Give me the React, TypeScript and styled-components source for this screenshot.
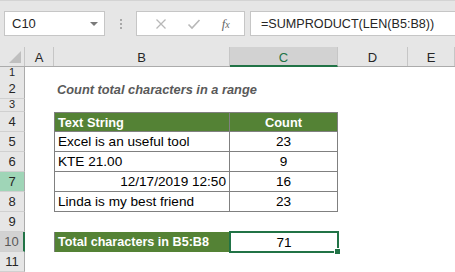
import React from "react";
import styled, { createGlobalStyle, css } from "styled-components";

const GlobalStyle = createGlobalStyle`
  html, body { margin: 0; padding: 0; background: #ffffff; }
  body { font-family: "Liberation Sans", Arial, sans-serif; overflow: hidden; }
`;

const COLS = "25px 29px 176px 108px 70px 1fr";

const Window = styled.div`
  width: 455px;
  height: 272px;
  overflow: hidden;
  background: #ffffff;
  display: flex;
  flex-direction: column;
`;

const FormulaBar = styled.div`
  height: 47px;
  flex: none;
  box-sizing: border-box;
  background: #e6e6e6;
  border-top: 1px solid #d4d4d4;
  display: flex;
  align-items: flex-start;
  padding: 10px 0 0 4px;
`;

const NameBox = styled.div`
  width: 101px;
  height: 25px;
  box-sizing: border-box;
  background: #ffffff;
  border: 1px solid #c6c6c6;
  display: flex;
  align-items: center;
  justify-content: space-between;
  padding: 0 6px 0 7px;
  font-size: 13px;
  color: #262626;
`;

const DropArrow = styled.span`
  width: 0;
  height: 0;
  border-left: 4px solid transparent;
  border-right: 4px solid transparent;
  border-top: 4px solid #7a7a7a;
`;

const Grip = styled.div`
  width: 31px;
  height: 25px;
  display: flex;
  flex-direction: column;
  align-items: center;
  justify-content: center;
  gap: 2px;
  & > span {
    width: 2px;
    height: 2px;
    background: #a8a8a8;
  }
`;

const ButtonBox = styled.div`
  width: 109px;
  height: 25px;
  box-sizing: border-box;
  background: #ffffff;
  border: 1px solid #c6c6c6;
  display: flex;
  align-items: center;
  justify-content: space-around;
  padding: 0 4px 0 8px;
`;

const Fx = styled.span`
  font-family: "Liberation Serif", serif;
  font-style: italic;
  font-size: 13px;
  color: #666666;
`;

const FxSub = styled.span`
  font-size: 10px;
`;

const FormulaInput = styled.div`
  flex: 1;
  margin-left: 5px;
  height: 25px;
  box-sizing: border-box;
  background: #ffffff;
  border: 1px solid #c6c6c6;
  border-right: none;
  display: flex;
  align-items: center;
  padding-left: 10px;
  font-size: 12.6px;
  color: #262626;
`;

const Row = styled.div<{ $h: number }>`
  display: grid;
  grid-template-columns: ${COLS};
  height: ${(p) => p.$h}px;
  flex: none;
`;

const HeaderRow = styled(Row)`
  background: #e6e6e6;
  border-bottom: 1px solid #ababab;
  box-sizing: border-box;
`;

const Corner = styled.div`
  position: relative;
  border-right: 1px solid #c6c6c6;
  box-sizing: border-box;
  &::after {
    content: "";
    position: absolute;
    right: 3px;
    bottom: 3px;
    width: 0;
    height: 0;
    border-left: 12px solid transparent;
    border-bottom: 12px solid #bfbfbf;
  }
`;

const ColHead = styled.div<{ $active?: boolean }>`
  display: flex;
  align-items: center;
  justify-content: center;
  font-size: 13px;
  color: #262626;
  box-sizing: border-box;
  border-right: 1px solid #c6c6c6;
  padding-top: 1px;
  ${(p) =>
    p.$active &&
    css`
      background: #d2d2d2;
      color: #217346;
      border-bottom: 2px solid #217346;
      margin-bottom: -1px;
      padding-top: 2px;
    `}
`;

const RowHead = styled.div<{ $state?: "sel" | "hl"; $short?: boolean }>`
  display: flex;
  align-items: ${(p) => (p.$short ? "flex-end" : "center")};
  justify-content: center;
  font-size: 13px;
  color: #262626;
  background: #e6e6e6;
  box-sizing: border-box;
  border-right: 1px solid #ababab;
  border-bottom: 1px solid #d0d0d0;
  line-height: 1;
  ${(p) =>
    p.$short &&
    css`
      font-size: 11px;
      padding-bottom: 1px;
    `}
  ${(p) =>
    p.$state === "hl" &&
    css`
      background: #9fd5b7;
    `}
  ${(p) =>
    p.$state === "sel" &&
    css`
      background: #d2d2d2;
      color: #595959;
      border-right: 2px solid #217346;
    `}
`;

type Kind = "plain" | "title" | "head" | "body" | "total";

const Cell = styled.div<{
  $kind?: Kind;
  $align?: "left" | "center" | "right";
  $first?: boolean;
  $top?: boolean;
}>`
  position: relative;
  display: flex;
  align-items: center;
  box-sizing: border-box;
  font-size: 13.6px;
  color: #000000;
  white-space: nowrap;
  padding: 0 3px;
  justify-content: ${(p) =>
    p.$align === "center" ? "center" : p.$align === "right" ? "flex-end" : "flex-start"};
  ${(p) =>
    p.$kind === "title" &&
    css`
      font-style: italic;
      font-weight: bold;
      font-size: 12.8px;
      color: #595959;
      overflow: visible;
    `}
  ${(p) =>
    (p.$kind === "head" || p.$kind === "body") &&
    css`
      border-right: 1px solid #808080;
      border-bottom: 1px solid #808080;
    `}
  ${(p) =>
    p.$kind === "head" &&
    css`
      background: #548235;
      color: #ffffff;
      font-weight: bold;
      font-size: 12.8px;
    `}
  ${(p) =>
    p.$top &&
    css`
      border-top: 1px solid #808080;
    `}
  ${(p) =>
    p.$first &&
    css`
      border-left: 1px solid #808080;
    `}
  ${(p) =>
    p.$kind === "total" &&
    css`
      background: #548235;
      color: #ffffff;
      font-weight: bold;
      font-size: 12.6px;
      border-left: 1px solid #808080;
    `}
`;

const Selection = styled.div`
  position: absolute;
  left: -1px;
  top: -1px;
  right: -1px;
  bottom: -1px;
  border: 2px solid #217346;
  pointer-events: none;
  &::after {
    content: "";
    position: absolute;
    right: -4px;
    bottom: -4px;
    width: 5px;
    height: 5px;
    background: #217346;
    border: 1px solid #ffffff;
  }
`;

const CellValue = styled.span`
  position: relative;
  z-index: 1;
`;

type RowDef = {
  n: number;
  h: number;
  state?: "sel" | "hl";
  b?: React.ReactNode;
  c?: React.ReactNode;
  kind?: Kind;
  bAlign?: "left" | "right";
  top?: boolean;
  total?: boolean;
};

const rows: RowDef[] = [
  { n: 1, h: 12 },
  { n: 2, h: 20, b: "Count total characters in a range", kind: "title" },
  { n: 3, h: 13 },
  { n: 4, h: 20, b: "Text String", c: "Count", kind: "head", top: true },
  { n: 5, h: 20, b: "Excel is an useful tool", c: "23", kind: "body" },
  { n: 6, h: 20, b: "KTE 21.00", c: "9", kind: "body" },
  { n: 7, h: 20, state: "hl", b: "12/17/2019 12:50", c: "16", kind: "body", bAlign: "right" },
  { n: 8, h: 20, b: "Linda is my best friend", c: "23", kind: "body" },
  { n: 9, h: 20 },
  { n: 10, h: 20, state: "sel", total: true },
  { n: 11, h: 20 },
];

export default function App() {
  return (
    <Window>
      <GlobalStyle />
      <FormulaBar>
        <NameBox>
          <span>C10</span>
          <DropArrow />
        </NameBox>
        <Grip>
          <span />
          <span />
          <span />
        </Grip>
        <ButtonBox>
          <svg width="12" height="12" viewBox="0 0 12 12">
            <path d="M1.5 1.5 L10.5 10.5 M10.5 1.5 L1.5 10.5" stroke="#b8b8b8" strokeWidth="1.3" fill="none" />
          </svg>
          <svg width="14" height="12" viewBox="0 0 14 12">
            <path d="M1.5 6.5 L5 10 L12.5 2" stroke="#b8b8b8" strokeWidth="1.6" fill="none" />
          </svg>
          <Fx>
            f<FxSub>x</FxSub>
          </Fx>
        </ButtonBox>
        <FormulaInput>=SUMPRODUCT(LEN(B5:B8))</FormulaInput>
      </FormulaBar>

      <HeaderRow $h={20}>
        <Corner />
        <ColHead>A</ColHead>
        <ColHead>B</ColHead>
        <ColHead $active>C</ColHead>
        <ColHead>D</ColHead>
        <ColHead>E</ColHead>
      </HeaderRow>

      {rows.map((r) => (
        <Row key={r.n} $h={r.h}>
          <RowHead $state={r.state} $short={r.h < 15}>
            {r.n}
          </RowHead>
          <Cell />
          {r.total ? (
            <>
              <Cell $kind="total">Total characters in B5:B8</Cell>
              <Cell $align="center">
                <Selection />
                <CellValue>71</CellValue>
              </Cell>
            </>
          ) : (
            <>
              <Cell $kind={r.kind} $first={r.kind === "head" || r.kind === "body"} $top={r.top} $align={r.bAlign}>
                {r.b}
              </Cell>
              <Cell $kind={r.kind === "title" ? undefined : r.kind} $top={r.top} $align="center">
                {r.c}
              </Cell>
            </>
          )}
          <Cell />
          <Cell />
        </Row>
      ))}
    </Window>
  );
}
